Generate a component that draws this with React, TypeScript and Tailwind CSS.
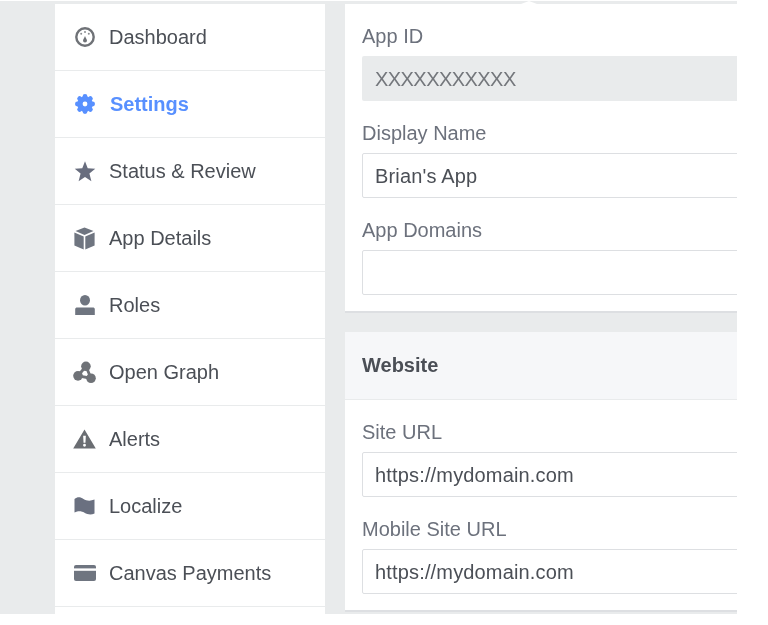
const gearLobes = [0, 45, 90, 135, 180, 225, 270, 315]

const Icons = {
  dashboard: (
    <svg viewBox="0 0 20 20" className="h-5 w-5" fill="none">
      <circle cx="10" cy="10" r="8.7" stroke="#6f7277" strokeWidth="2.4" />
      <path d="M8 13.5a2 2 0 0 0 4 0c0-1.2-1.2-2-2-4.5-.8 2.5-2 3.3-2 4.5z" fill="#6f7277" />
      <circle cx="10" cy="5" r="1" fill="#8b8e92" />
      <circle cx="6.2" cy="6.8" r="1" fill="#8b8e92" />
      <circle cx="13.8" cy="6.8" r="1" fill="#8b8e92" />
    </svg>
  ),
  settings: (
    <svg viewBox="0 0 20 20" className="h-5 w-5" fill="#5890ff">
      <circle cx="10" cy="10" r="7.8" />
      {gearLobes.map((a) => (
        <circle key={a} cx="10" cy="2.4" r="2.4" transform={`rotate(${a} 10 10)`} />
      ))}
      <circle cx="10" cy="10" r="2.4" fill="#ffffff" />
    </svg>
  ),
  star: (
    <svg viewBox="0 0 20 20" className="-ml-px h-[21px] w-[22px]" fill="#686d7e">
      <path d="M10 .2l2.6 6.8 7.2.4-5.6 4.6 1.9 7.2L10 15.2l-6.1 4 1.9-7.2L.2 7.4l7.2-.4z" />
    </svg>
  ),
  cube: (
    <svg viewBox="0 0 21 23" className="-ml-px h-[23px] w-[21px]" fill="#6f7580">
      <path d="M10.5 .4l9 3.6-9 3.9-9-3.9z" />
      <path d="M.4 5.6l9.3 4v13L.4 18.4z" />
      <path d="M20.6 5.6l-9.3 4v13l9.3-4.2z" />
    </svg>
  ),
  person: (
    <svg viewBox="0 0 20 20" className="h-5 w-5" fill="#6f7580">
      <ellipse cx="10" cy="5.2" rx="5" ry="5.2" />
      <path d="M.2 20v-6c0-1 .8-1.6 2-1.6h15.6c1.2 0 2 .6 2 1.6v6z" />
    </svg>
  ),
  graph: (
    <svg viewBox="0 0 24 24" className="-ml-0.5 h-[23px] w-[23px]" fill="#6f7277">
      <path d="M13.5 5.5L5.2 15.5 18.8 18z" fill="none" stroke="#6f7277" strokeWidth="3" />
      <circle cx="13.5" cy="5.5" r="5" />
      <circle cx="5.2" cy="15.5" r="5" />
      <circle cx="18.8" cy="18" r="5" />
    </svg>
  ),
  alert: (
    <svg viewBox="0 0 24 20" className="-ml-[2px] h-5 w-[23px]" fill="#6a6d72">
      <path
        fillRule="evenodd"
        d="M12 0l11.8 20H.2zM10.6 6.5l.4 7.5h2l.4-7.5zM12 15a1.5 1.5 0 1 0 0 3 1.5 1.5 0 0 0 0-3z"
      />
    </svg>
  ),
  flag: (
    <svg viewBox="0 0 20 18" className="-ml-px h-[18px] w-[21px]" fill="#6a7080">
      <path d="M0 2c3-2.4 6-2 9 0s7 2.2 11 .6V16.4c-3.6 1.8-7 1-10-.7s-6-2.2-10-.2z" />
    </svg>
  ),
  card: (
    <svg viewBox="0 0 22 16" className="-ml-px h-4 w-[22px]" fill="#6f7580">
      <rect width="22" height="16" rx="2" />
      <rect y="3.4" width="22" height="2.4" fill="#ffffff" />
    </svg>
  ),
}

const navItems = [
  { label: "Dashboard", icon: Icons.dashboard },
  { label: "Settings", icon: Icons.settings, active: true },
  { label: "Status & Review", icon: Icons.star },
  { label: "App Details", icon: Icons.cube },
  { label: "Roles", icon: Icons.person },
  { label: "Open Graph", icon: Icons.graph },
  { label: "Alerts", icon: Icons.alert },
  { label: "Localize", icon: Icons.flag },
  { label: "Canvas Payments", icon: Icons.card },
  { label: "", icon: null },
]

function NavRow({ label, icon, active }: { label: string; icon: React.ReactNode; active?: boolean }) {
  return (
    <div className="flex h-[67px] shrink-0 items-center border-b border-[#e9ebec] pl-[20px]">
      <div className="flex w-[34px] shrink-0 items-center justify-start">{icon}</div>
      {active ? (
        <span className="ml-px font-bold text-[#5890ff]">{label}</span>
      ) : (
        <span className="text-[#4b4f56]">{label}</span>
      )}
    </div>
  )
}

function Field({ label, value, disabled }: { label: string; value: string; disabled?: boolean }) {
  return (
    <div>
      <label className="block h-6 text-[20px] leading-6 text-[#6c717c]">{label}</label>
      <div
        className={
          disabled
            ? "mt-2 flex h-[45px] w-[420px] items-center rounded-[2px] bg-[#e9ebec] pl-[13px] tracking-[-0.55px] text-[#74777c]"
            : "mt-2 flex h-[45px] w-[420px] items-center rounded-[2px] border border-[#dddfe2] bg-white pl-[12px] tracking-[0.16px] text-[#4b4f56]"
        }
      >
        {value}
      </div>
    </div>
  )
}

export default function App() {
  return (
    <div className="h-[625px] w-[768px] overflow-hidden bg-white font-['Liberation_Sans',Arial,sans-serif] text-[20px] blur-[0.4px]">
      <div className="mt-px flex h-[613px] w-[737px] overflow-hidden bg-[#e9ebec] pt-[3px]">
        {/* Sidebar */}
        <div className="ml-[55px] flex w-[270px] shrink-0 flex-col bg-white">
          {navItems.map((item, i) => (
            <NavRow key={i} label={item.label} icon={item.icon} active={item.active} />
          ))}
        </div>

        {/* Main column */}
        <div className="relative ml-[20px] flex min-w-0 flex-1 flex-col gap-[19px]">
          <div className="absolute left-[176px] top-[-3px] h-0 w-0 border-x-[8px] border-b-[3px] border-x-transparent border-b-white" />
          <div className="flex flex-col gap-5 border-b-2 border-[#dddfe2] bg-white pb-4 pl-[17px] pt-5">
            <Field label="App ID" value="XXXXXXXXXXX" disabled />
            <Field label="Display Name" value="Brian's App" />
            <Field label="App Domains" value="" />
          </div>

          <div className="border-b-2 border-[#dddfe2] bg-white">
            <div className="flex h-[68px] items-center border-b border-[#e9ebec] bg-[#f6f7f9] pb-px pl-[17px] font-bold text-[#4b4f56]">
              Website
            </div>
            <div className="flex flex-col gap-5 pb-4 pl-[17px] pt-5">
              <Field label="Site URL" value="https://mydomain.com" />
              <Field label="Mobile Site URL" value="https://mydomain.com" />
            </div>
          </div>
        </div>
      </div>
    </div>
  )
}
